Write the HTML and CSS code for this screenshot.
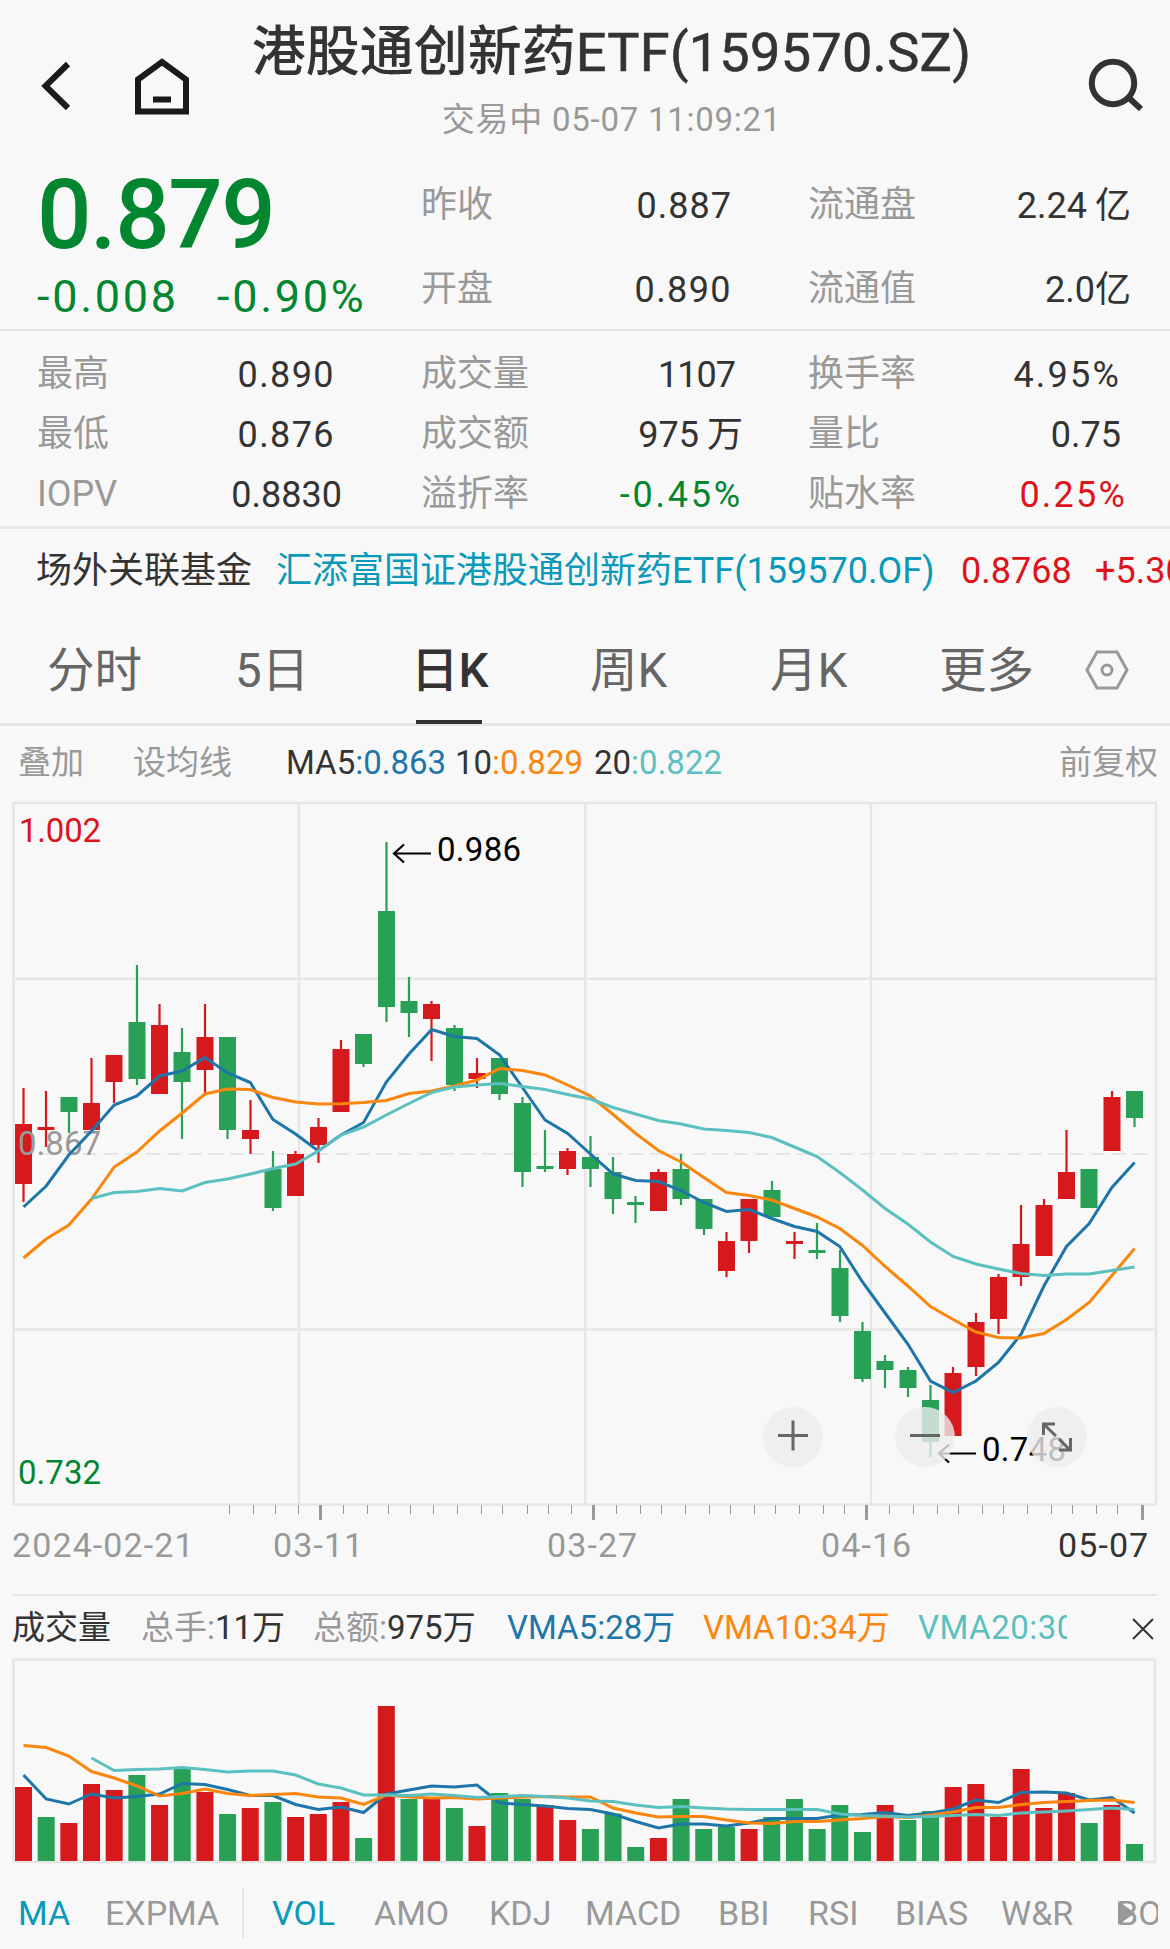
FILE: index.html
```html
<!DOCTYPE html>
<html lang="zh-CN">
<head>
  <meta charset="UTF-8">
  <meta name="viewport" content="width=device-width, initial-scale=1.0">
  <title>港股通创新药ETF(159570.SZ)</title>
  <link rel="stylesheet" href="styles.css">
</head>
<body>
  <!-- Top bar -->
  <header class="topbar">
    <svg class="icon-back" width="30" height="52" viewBox="0 0 30 52"><path d="M27 4L4.500 26L27 48"/></svg>
    <svg class="icon-home" width="56" height="58" viewBox="0 0 56 58"><path d="M4 21.500L28 4L52 21.500V53.500H4Z"/><path d="M19 41.500H37"/></svg>
    <div class="heading">
      <h1>港股通创新药<span>ETF(159570.SZ)</span></h1>
      <p>交易中 <span>05-07 11:09:21</span></p>
    </div>
    <svg class="icon-search" width="56" height="56" viewBox="0 0 56 56"><circle cx="25" cy="25" r="21.200"/><path d="M40 39L53 51"/></svg>
  </header>

  <!-- Price and main stats -->
  <section class="quote">
    <div class="price-box">
      <div class="price">0.879</div>
      <div class="change"><span>-0.008</span><span>-0.90%</span></div>
    </div>
    <div class="stats stats-top">
      <label>昨收</label><b>0.887</b><label>流通盘</label><b class="tight">2.24<i></i>亿</b>
      <label>开盘</label><b class="loose">0.890</b><label>流通值</label><b class="tight">2.0亿</b>
    </div>
  </section>

  <section class="stats stats-more">
    <label>最高</label><b class="loose">0.890</b><label>成交量</label><b class="in-8 narrow">1107</b><label>换手率</label><b class="in-7 wide">4.95%</b>
    <label>最低</label><b class="loose">0.876</b><label>成交额</label><b class="tight">975<i></i>万</b><label>量比</label><b class="in-7 tight">0.75</b>
    <label>IOPV</label><b class="out tight">0.8830</b><label>溢折率</label><b class="green wider">-0.45%</b><label>贴水率</label><b class="red wide">0.25%</b>
  </section>

  <section class="fund">
    <span>场外关联基金</span>
    <a>汇添富国证港股通创新药ETF(159570.OF)</a>
    <span class="red">0.8768</span>
    <span class="red">+5.30%</span>
  </section>

  <!-- Period tabs -->
  <nav class="periods">
    <span>分时</span>
    <span>5日</span>
    <span class="active">日K</span>
    <span>周K</span>
    <span>月K</span>
    <span>更多</span>
    <svg width="44" height="40" viewBox="0 0 44 40"><path d="M12 2H32L42 20L32 38H12L2 20Z"/><circle cx="22" cy="20" r="5"/></svg>
  </nav>

  <div class="ma-row">
    <span>叠加</span>
    <span>设均线</span>
    <span class="ma"><em>MA5</em><em class="c5">:0.863</em></span>
    <span class="ma"><em>10</em><em class="c10">:0.829</em></span>
    <span class="ma"><em>20</em><em class="c20">:0.822</em></span>
    <span>前复权</span>
  </div>

  <!-- Candlestick chart -->
  <div class="chart">
    <svg id="kline" width="1170" height="734" viewBox="0 0 1170 734"></svg>
    <div class="tools">
      <button><svg width="60" height="60" viewBox="0 0 60 60"><path d="M15 28.500H45M30 13.500V43.500"/></svg></button>
      <button><svg width="60" height="60" viewBox="0 0 60 60"><path d="M15 28.500H45"/></svg></button>
      <button><svg width="60" height="60" viewBox="0 0 60 60"><path d="M28 17H16.500V28M17 17.500L29 29M32 32L43 43M43.500 31V43H32"/></svg></button>
    </div>
  </div>

  <div class="dates">
    <span>2024-02-21</span>
    <span>03-11</span>
    <span>03-27</span>
    <span>04-16</span>
    <span class="today">05-07</span>
  </div>

  <!-- Volume -->
  <div class="vol-row">
    <span>成交量</span>
    <span><em>总手:</em>11万</span>
    <span><em>总额:</em>975万</span>
    <span class="c5">VMA5:28万</span>
    <span class="c10">VMA10:34万</span>
    <span class="c20 cut">VMA20:30</span>
    <svg width="22" height="22" viewBox="0 0 22 22"><path d="M1 1L21 21M21 1L1 21"/></svg>
  </div>
  <svg id="volume" width="1170" height="226" viewBox="0 0 1170 226"></svg>

  <!-- Indicator tabs -->
  <nav class="indicators">
    <span class="on">MA</span>
    <span>EXPMA</span>
    <span class="on sep">VOL</span>
    <span>AMO</span>
    <span>KDJ</span>
    <span>MACD</span>
    <span>BBI</span>
    <span>RSI</span>
    <span>BIAS</span>
    <span>W&amp;R</span>
    <span class="last">BO</span>
  </nav>

  <script src="chart.js"></script>
</body>
</html>
```

FILE: styles.css
```css
* {
  box-sizing: border-box;
}
body {
  width: 1170px;
  height: 1949px;
  margin: 0;
  overflow: hidden;
  background-color: #f8f8f8;
  color: #333;
  font-family: Roboto, "Noto Sans CJK SC", sans-serif;
  font-size: 36px;
  line-height: 1;
  white-space: nowrap;
}
h1, p {
  margin: 0;
  font-weight: normal;
}
b, em, i {
  font-weight: normal;
  font-style: normal;
}
svg {
  display: block;
  fill: none;
}
.red {
  color: #dc141c;
}
.green {
  color: #02862f;
}
.c5 {
  color: #1e76a8;
}
.c10 {
  color: #fb860d;
}
.c20 {
  color: #5cc0c0;
}

/* Top bar */
.topbar {
  display: grid;
  grid-template-columns: 93px 68px 902px 56px;
  align-items: start;
  height: 163px;
  padding-left: 41px;
}
.topbar svg {
  stroke: #1a1a1a;
  stroke-width: 6;
}
.icon-back {
  margin-top: 60px;
}
.icon-home {
  margin-top: 58px;
}
.topbar .icon-search {
  margin-top: 58px;
  margin-left: -16px;
  stroke: #333;
}
.heading {
  text-align: center;
  padding-top: 23px;
  padding-right: 83px;
}
.heading h1 {
  font-size: 54px;
  font-weight: 500;
  line-height: 60px;
}
.heading h1 span {
  font-weight: 400;
  letter-spacing: 0.300px;
  -webkit-text-stroke: 0.600px #333;
}
.heading p {
  margin-top: 17px;
  color: #999;
  font-size: 33px;
  line-height: 40px;
  letter-spacing: 0.750px;
}

/* Price */
.quote {
  display: grid;
  grid-template-columns: 384px 749px;
  height: 168px;
  padding-left: 37px;
  border-bottom: 2px solid #e6e6e6;
}
.price {
  height: 100px;
  color: #02862f;
  font-size: 96px;
  font-weight: 500;
  line-height: 104px;
  letter-spacing: -1.500px;
}
.change {
  display: grid;
  grid-template-columns: 180px 160px;
  color: #02862f;
  font-size: 45px;
  line-height: 68px;
  letter-spacing: 2.700px;
}
.stats {
  display: grid;
  align-items: center;
}
.stats label {
  color: #999;
}
.stats b {
  padding-top: 2px;
  text-align: right;
  letter-spacing: 1px;
}
.stats i {
  display: inline-block;
  width: 8px;
}
.stats .narrow {
  letter-spacing: -1px;
}
.stats .tight {
  letter-spacing: 0;
}
.stats .loose {
  letter-spacing: 1.400px;
}
.stats .wide {
  letter-spacing: 2.200px;
}
.stats .wider {
  letter-spacing: 2.800px;
}
.stats-top {
  grid-template-columns: 160px 151px 226px 173px;
  grid-auto-rows: 84px;
}
.stats-top label:nth-of-type(even) {
  padding-left: 76px;
}
.stats-more {
  grid-template-columns: 179px 119px 206px 202px 226px 158px;
  grid-auto-rows: 60px;
  height: 198px;
  padding: 13px 0 0 37px;
  border-bottom: 3px solid #e6e6e6;
}
.stats-more label:nth-of-type(3n+2) {
  padding-left: 86px;
}
.stats-more label:nth-of-type(3n) {
  padding-left: 65px;
}
.stats-more .in-8 {
  padding-right: 8px;
}
.stats-more .in-7 {
  padding-right: 6px;
}
.stats-more .out {
  margin-right: -7px;
}

.fund {
  display: grid;
  grid-template-columns: 240px 685px 134px 120px;
  height: 84px;
  padding-left: 36px;
  line-height: 85px;
}
.fund a {
  color: #0a99b8;
}

/* Period tabs */
.periods {
  display: grid;
  grid-template-columns: 188px 179px 176px 180px 169px 146px 44px;
  height: 113px;
  padding-left: 47px;
  border-bottom: 3px solid #e6e6e6;
  color: #666;
  font-size: 47.500px;
  line-height: 116px;
}
.periods .active {
  justify-self: start;
  height: 111px;
  margin-left: -3px;
  color: #333;
  font-weight: 500;
  background: linear-gradient(#333, #333) 5px 107px / 66px 4px no-repeat;
}
.periods svg {
  margin-top: 37px;
  stroke: #999;
  stroke-width: 3;
}

.ma-row {
  display: grid;
  grid-template-columns: 115px 153px 169px 139px 465px 100px;
  height: 64px;
  padding-left: 18px;
  color: #999;
  font-size: 33px;
  line-height: 74px;
}
.ma {
  color: #333;
}

/* Chart */
.chart {
  position: relative;
}
.tools {
  position: absolute;
  top: 617px;
  left: 763px;
  display: flex;
  gap: 72px;
}
.tools button {
  width: 60px;
  height: 60px;
  padding: 0;
  border: none;
  border-radius: 50%;
  background-color: rgba(236, 236, 236, 0.8);
}
.tools svg {
  stroke: #666;
  stroke-width: 3;
}
.grid {
  stroke: #e6e6e6;
  stroke-width: 2.500;
}
.dash {
  stroke-dasharray: 14 7;
  stroke-width: 2;
}
.line {
  fill: none;
  stroke: currentColor;
  stroke-width: 3;
}
.up {
  fill: #d6191d;
}
.down {
  fill: #28a055;
}
.tick {
  fill: #999;
}
.mark {
  stroke: #000;
  stroke-width: 2.200;
}
.num {
  fill: currentColor;
  font-size: 33px;
}
.black {
  color: #000;
}
.gray {
  color: #999;
}

.dates {
  display: grid;
  grid-template-columns: 261px 274px 274px 237px 110px;
  height: 70px;
  padding-left: 12px;
  color: #999;
  font-size: 34px;
  line-height: 42px;
  letter-spacing: 1.100px;
}
.today {
  color: #333;
}

/* Volume */
.vol-row {
  display: grid;
  grid-template-columns: 129px 172px 194px 196px 215px 214px 22px;
  height: 56px;
  margin: 0 13px 0 12px;
  border-top: 2px solid #e6e6e6;
  font-size: 33px;
  line-height: 64px;
}
.vol-row em {
  color: #999;
}
.vol-row .cut {
  width: 149px;
  height: 62px;
  overflow: hidden;
  letter-spacing: 0.500px;
}
.vol-row svg {
  margin-top: 22px;
  stroke: #333;
  stroke-width: 2;
}

.indicators {
  display: grid;
  grid-template-columns: 87px 166px 103px 115px 96px 133px 90px 87px 106px 116px 41px;
  width: 1158px;
  height: 75px;
  padding-left: 18px;
  overflow: hidden;
  color: #999;
  font-size: 34px;
  line-height: 74px;
}
.indicators .on {
  color: #0a99b8;
}
.indicators .sep {
  background: linear-gradient(#e6e6e6, #e6e6e6) 0 12px / 2px 50px no-repeat;
  margin-left: -29px;
  padding-left: 30px;
}
.indicators .last {
  position: relative;
}
/* scroll arrow over the last tab */
.indicators .last::before {
  content: "";
  position: absolute;
  top: 25px;
  left: 1px;
  border: 12px solid transparent;
  border-left: 17px solid #999;
  border-right: none;
}
```

FILE: chart.js
```js
const STEP = 22.675;
const FIRST = 23.5;

// [direction, high, body top, body bottom, low]
const candles = [
  [1, 298, 334, 394, 412], [1, 301, 337, 340, 357], [0, 307, 307, 322, 343], [1, 268, 313, 340, 340],
  [1, 265, 265, 292, 313], [0, 175, 232, 289, 295], [1, 214, 235, 304, 304], [0, 238, 262, 292, 349],
  [1, 214, 247, 280, 303], [0, 247, 247, 340, 349], [1, 310, 340, 349, 364], [0, 361, 379, 418, 421],
  [1, 361, 364, 406, 406], [1, 328, 337, 355, 373], [1, 250, 259, 322, 322], [0, 244, 244, 274, 277],
  [0, 52, 121, 217, 232], [0, 187, 211, 223, 247], [1, 211, 214, 229, 271], [0, 235, 238, 295, 301],
  [1, 268, 283, 289, 298], [0, 268, 268, 304, 310], [0, 307, 313, 382, 397], [0, 340, 376, 379, 382],
  [1, 358, 361, 379, 385], [0, 346, 367, 379, 397], [0, 367, 382, 409, 424], [0, 406, 412, 415, 433],
  [1, 379, 382, 421, 421], [0, 364, 379, 409, 415], [0, 409, 409, 439, 445], [1, 442, 451, 481, 487],
  [1, 409, 409, 451, 463], [0, 391, 400, 427, 427], [1, 442, 451, 454, 469], [0, 433, 460, 463, 469],
  [0, 460, 478, 526, 532], [0, 532, 541, 589, 592], [0, 565, 571, 580, 598], [0, 577, 580, 598, 607],
  [0, 595, 610, 652, 667], [1, 577, 583, 646, 646], [1, 523, 532, 577, 586], [1, 484, 487, 529, 544],
  [1, 415, 454, 487, 496], [1, 409, 415, 466, 466], [1, 340, 382, 409, 409], [0, 379, 379, 418, 418],
  [1, 301, 307, 361, 361], [0, 301, 301, 328, 337]
];
const ma5 = [417, 396, 365, 341, 315, 306, 286, 281, 267.5, 283, 292.5, 329.5, 344, 361, 345, 332.5, 292, 264, 239.5, 246.5, 248.5, 265, 297.5, 330, 343.5, 364, 384, 390.5, 391.5, 400.5, 412.5, 421.5, 419.5, 428.5, 436.5, 441.5, 456.5, 492, 523, 554, 591, 602.5, 591, 572.5, 544, 496, 456.5, 433.5, 397.5, 372.5];
const ma10 = [468, 449, 435, 409, 377, 362, 341, 323, 304, 299, 299.5, 307.5, 312, 314, 313.7, 312.5, 310.5, 303.5, 301, 296, 290, 278.5, 280.5, 285, 295, 306, 324.5, 343.5, 360.5, 372, 387.5, 402.5, 405.5, 410, 418.5, 427, 438.5, 455.5, 476.5, 496, 516.5, 529.5, 542, 547.5, 548, 543.5, 529.5, 512.5, 485.5, 458.5];
const ma20 = [408.5, 402.5, 401.5, 398.5, 401, 392.5, 389, 384, 378.5, 374, 361, 345, 337, 325, 313.5, 302.5, 297, 295, 293.5, 296.5, 299.5, 304.5, 309, 317.5, 324, 330.5, 334, 339, 340.5, 342.5, 347.5, 357, 366.5, 382.5, 400, 418.5, 434, 452, 466.5, 474, 479, 483.5, 485.5, 484, 484, 480.5, 477];

// Volume bar tops and their colours (r = up, g = down)
const volumes = [137, 167, 173, 134, 140, 125, 155, 119, 142, 164, 158, 152, 167, 164, 152, 188, 56, 149, 149, 158, 176, 143, 149, 155, 170, 179, 163.5, 197, 188, 149, 179, 177, 179, 167, 149, 179, 155, 182, 155, 170, 161, 137, 134, 167, 119, 158, 143, 173, 155, 194];
const volumeColors = "rgrrrgrgrgrgrrrgrgrgrggrrgggrgggrgggggrggrrrrrrgrg";
const vma5 = [125, 149, 154, 144, 148, 146.5, 144, 133.5, 134.5, 139.5, 145.5, 145.5, 154.5, 159.5, 157, 162.5, 144, 140, 136, 137, 135, 153, 154.5, 156, 158.5, 159.5, 164, 171.5, 178, 174, 174, 176, 173, 168.5, 168.5, 168.5, 165, 164.5, 162.5, 165.5, 163, 159, 150, 152.5, 142.5, 142, 143, 150, 147.5, 163];
const vma10 = [95.5, 97.5, 106, 121.5, 128, 136, 146, 143.5, 139, 143.5, 145.5, 144.5, 143.5, 147, 148, 154.5, 145, 147, 148, 147.5, 149, 148, 147, 146.5, 147, 147, 158, 163, 167, 166.5, 166.5, 170, 173, 173.5, 171.5, 171.5, 170, 168.5, 166.5, 167.5, 165, 162, 157.5, 157.5, 154.5, 152.5, 151.5, 150.5, 150, 152.5];
const vma20 = [108, 120.5, 119.5, 119, 117.5, 119.5, 122, 121, 121, 125, 134, 138, 145, 145, 145.5, 144, 145.5, 147.5, 146.5, 145.5, 146.5, 148, 151, 151.5, 155, 157.5, 156.5, 158, 159, 159.5, 159.5, 159.5, 159.5, 164, 165.5, 166, 167, 166.5, 165.5, 164.5, 165.5, 163, 162, 161, 159.5, 158, 159.5];

// Minor ticks of the date axis
const ticks = [229, 253, 275, 298, 343, 367, 388, 410, 433, 457, 481, 502, 527, 548, 571, 616, 640, 661, 685, 709, 730, 754, 775, 799, 823, 844, 889, 913, 937, 958, 982, 1003, 1027, 1051, 1072, 1096, 1117];
const majorTicks = [320, 593, 866, 1142];

const x = i => FIRST + i * STEP;

function line(values, start, cls) {
  const points = values.map((y, i) => `${x(i + start).toFixed(1)},${y}`).join(" ");
  return `<polyline class="line ${cls}" points="${points}"/>`;
}

function num(text, left, baseline, width, cls) {
  return `<text class="num ${cls}" x="${left}" y="${baseline}" textLength="${width}">${text}</text>`;
}

function arrow(left, y) {
  return `<path class="mark" d="M${left} ${y}h37M${left + 10} ${y - 9}l-10 9l10 9"/>`;
}

function drawKline() {
  let out = `<path class="grid" d="M13.500 13H1156V714.500H13.500ZM13.500 188.700H1156M13.500 539.500H1156M299 13V714.500M585.300 13V714.500M871 13V714.500"/>`;
  out += `<path class="grid dash" d="M20 364H1156"/>`;

  candles.forEach(([up, high, top, bottom, low], i) => {
    const c = Math.round(x(i) * 2) / 2;
    const cls = up ? "up" : "down";
    out += `<rect class="${cls}" x="${c - 1.1}" y="${high}" width="2.200" height="${low - high}"/>`;
    out += `<rect class="${cls}" x="${c - 8.5}" y="${top}" width="17" height="${bottom - top}"/>`;
  });

  out += num("1.002", 19, 52, 82, "red");
  out += num("0.867", 18, 365, 83, "gray");
  out += num("0.732", 18, 694, 83, "green");
  out += line(ma5, 0, "c5") + line(ma10, 0, "c10") + line(ma20, 3, "c20");
  out += arrow(394, 63.5) + num("0.986", 437, 71, 84, "black");
  out += arrow(939, 663.5) + num("0.748", 982, 671, 84, "black");

  ticks.forEach(t => out += `<rect class="tick" x="${t}" y="715" width="1" height="9"/>`);
  majorTicks.forEach(t => out += `<rect class="tick" x="${t - 1}" y="715" width="3" height="15"/>`);
  document.getElementById("kline").innerHTML = out;
}

function drawVolume() {
  let out = `<path class="grid" d="M13.500 9.500H1155V212H13.500Z"/>`;
  volumes.forEach((top, i) => {
    const cls = volumeColors[i] === "r" ? "up" : "down";
    out += `<rect class="${cls}" x="${x(i) - 8.5}" y="${top}" width="17" height="${211 - top}"/>`;
  });
  out += line(vma5, 0, "c5") + line(vma10, 0, "c10") + line(vma20, 3, "c20");
  document.getElementById("volume").innerHTML = out;
}

drawKline();
drawVolume();
```
